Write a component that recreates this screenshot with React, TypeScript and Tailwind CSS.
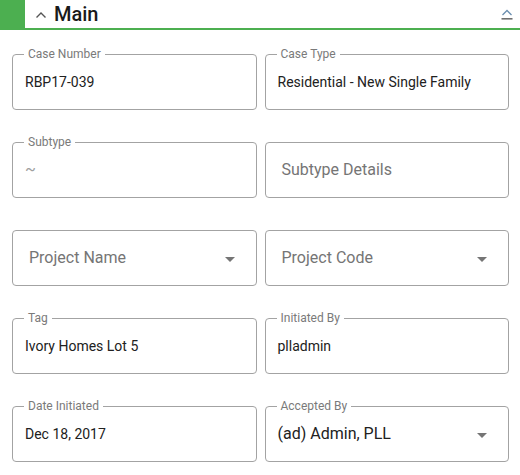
import React from 'react';

type FieldProps = {
    label?: string;
    value?: string;
    placeholder?: string;
    select?: boolean;
    muted?: boolean;
    large?: boolean;
};

const ArrowDown = () => (
    <svg width="10" height="5" viewBox="0 0 10 5" className="absolute right-[21px] top-[26px]">
        <path d="M0 0l5 5 5-5z" fill="#757575" />
    </svg>
);

const Field: React.FC<FieldProps> = ({ label, value, placeholder, select, muted, large }) => (
    <div className="relative h-[56px] rounded-[4px] border border-[#a3a3a3] flex items-center">
        {label && (
            <span className="absolute -top-[8px] left-[11px] px-[4px] bg-white text-[12px] leading-[14px] text-[#7a7a7a]">
                {label}
            </span>
        )}
        {placeholder ? (
            <span className="pl-[16px] text-[16px] text-[#757575]">{placeholder}</span>
        ) : (
            <span
                className={
                    muted
                        ? 'pl-[12px] text-[16px] text-[#a0a0a0]'
                        : large
                          ? 'pl-[12px] text-[16px] text-[#212121]'
                          : 'pl-[12px] text-[14px] text-[#212121]'
                }
            >
                {value}
            </span>
        )}
        {select && <ArrowDown />}
    </div>
);

export default function App() {
    return (
        <div className="w-[520px] min-h-[475px] bg-white font-['Roboto',sans-serif]">
            {/* Section header */}
            <div className="flex items-center h-[30px] border-b-2 border-[#4caf50]">
                <div className="w-[25px] self-stretch bg-[#4caf50]" />
                <svg width="12" height="8" viewBox="0 0 12 8" className="ml-[10px] mt-[1px]">
                    <path d="M1.5 6.5L6 2l4.5 4.5" fill="none" stroke="#555" strokeWidth="1.4" />
                </svg>
                <span className="ml-[7px] text-[20px] font-medium text-[#1a1a1a] leading-none">Main</span>
                <svg width="14" height="14" viewBox="0 0 14 14" className="ml-auto mr-[6px] mt-[1px]">
                    <path d="M2.5 7L7 2.5 11.5 7" fill="none" stroke="#6b8fb0" strokeWidth="1.3" />
                    <rect x="1.5" y="10" width="11" height="1.6" fill="#6f6f6f" />
                </svg>
            </div>

            {/* Fields */}
            <div className="grid grid-cols-2 gap-x-[8px] gap-y-[32px] pl-[12px] pr-[11px] pt-[24px]">
                <Field label="Case Number" value="RBP17-039" />
                <Field label="Case Type" value="Residential - New Single Family" />
                <Field label="Subtype" value="~" muted />
                <Field placeholder="Subtype Details" />
                <Field placeholder="Project Name" select />
                <Field placeholder="Project Code" select />
                <Field label="Tag" value="Ivory Homes Lot 5" />
                <Field label="Initiated By" value="plladmin" />
                <Field label="Date Initiated" value="Dec 18, 2017" />
                <Field label="Accepted By" value="(ad) Admin, PLL" select large />
            </div>
        </div>
    );
}
